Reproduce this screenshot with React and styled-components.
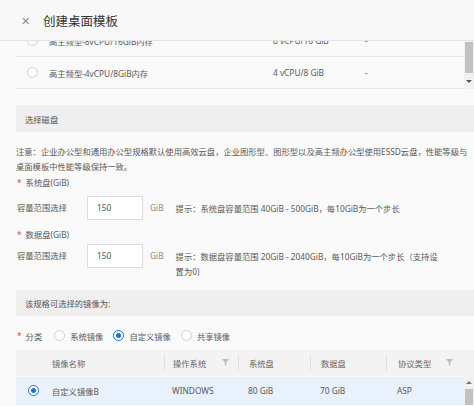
import React, { useLayoutEffect, useRef } from 'react';
import styled, { createGlobalStyle } from 'styled-components';

const GlobalStyle = createGlobalStyle`
  html, body {
    margin: 0;
    padding: 0;
    background: #fafafa;
  }
  body {
    font-family: "Noto Sans", "Noto Sans CJK SC", sans-serif;
    font-size: 8.3px;
    color: #595959;
  }
`;

const Page = styled.div`
  width: 474px;
  height: 406px;
  overflow: hidden;
  background: #fafafa;
  display: flex;
  flex-direction: column;
`;

const Header = styled.div`
  height: 41px;
  flex-shrink: 0;
  box-sizing: border-box;
  border-bottom: 1px solid #e3e3e3;
  background: #f8f8f8;
  display: flex;
  align-items: center;
  padding-left: 21px;
  gap: 13px;
`;

const Close = styled.span`
  font-size: 11px;
  color: #8a8a8a;
  line-height: 1;
`;

const Title = styled.h1`
  margin: 0;
  font-size: 12.5px;
  font-weight: 400;
  color: #333;
`;

const Body = styled.div`
  padding-left: 16px;
  display: flex;
  flex-direction: column;
`;

/* 规格列表 (已滚动) */
const SpecBox = styled.div`
  height: 48px;
  display: flex;
`;

const SpecList = styled.div`
  flex: 1;
  overflow: hidden;
`;

const SpecRow = styled.div`
  height: 32px;
  box-sizing: border-box;
  border-bottom: 1px solid #e8e8e8;
  display: flex;
  align-items: center;
`;

const Cell = styled.div`
  width: ${(p) => p.$w}px;
  flex-shrink: 0;
  box-sizing: border-box;
  padding-left: ${(p) => p.$pad || 0}px;
  padding-right: ${(p) => p.$padR || 0}px;
  display: flex;
  align-items: center;
  justify-content: ${(p) => (p.$center ? 'center' : 'space-between')};
  white-space: nowrap;
`;

const ScrollTrack = styled.div`
  width: 10px;
  flex-shrink: 0;
  background: #f1f1f1;
  display: flex;
  flex-direction: column;
  align-items: center;
  justify-content: ${(p) => (p.$up ? 'flex-start' : 'space-between')};
  padding: ${(p) => (p.$up ? '5px 0 0' : '1px 0 6px')};
  box-sizing: border-box;
`;

const ScrollThumb = styled.div`
  width: 8px;
  height: ${(p) => p.$h}px;
  background: #c1c1c1;
  margin-top: ${(p) => p.$mt || 0}px;
`;

const Arrow = styled.div`
  width: 0;
  height: 0;
  border-left: 3px solid transparent;
  border-right: 3px solid transparent;
  ${(p) => (p.$up ? 'border-bottom: 3px solid #777;' : 'border-top: 3px solid #555;')}
`;

const Radio = styled.span`
  width: 11px;
  height: 11px;
  box-sizing: border-box;
  border-radius: 50%;
  border: 1px solid ${(p) => (p.$checked ? '#1f6fd1' : '#cfcfcf')};
  background: #fff;
  display: inline-flex;
  align-items: center;
  justify-content: center;
  flex-shrink: 0;

  &::after {
    content: '';
    width: 5px;
    height: 5px;
    border-radius: 50%;
    background: ${(p) => (p.$checked ? '#1f6fd1' : 'transparent')};
  }
`;

const Band = styled.div`
  margin-top: ${(p) => p.$mt}px;
  height: ${(p) => p.$h}px;
  background: #efefef;
  display: flex;
  align-items: center;
  padding-left: 9px;
  color: #555;
`;

const Note = styled.div`
  margin-top: 12px;
  width: 455px;
  line-height: 15px;
`;

const FieldTitle = styled.div`
  margin-top: ${(p) => p.$mt}px;
  line-height: 14px;
  padding-left: 1px;
`;

const Star = styled.span`
  color: #e2424b;
  margin-right: 4px;
`;

const InputRow = styled.div`
  margin-top: ${(p) => p.$mt}px;
  display: flex;
  align-items: flex-start;
  padding-left: 1px;
`;

const FieldLabel = styled.div`
  width: 70px;
  line-height: 24px;
`;

const NumInput = styled.div`
  width: 56px;
  height: 24px;
  box-sizing: border-box;
  border: 1px solid #dcdcdc;
  background: #fff;
  padding-left: 9px;
  line-height: 22px;
  color: #555;
`;

const Unit = styled.div`
  margin-left: 7px;
  line-height: 24px;
  color: #888;
`;

const Hint = styled.div`
  margin-left: 12px;
  padding-top: 4.5px;
  line-height: 15px;
  max-width: 266px;
`;

const CategoryRow = styled.div`
  margin-top: 13px;
  height: 14px;
  display: flex;
  align-items: center;
  padding-left: 1px;
`;

const Option = styled.label`
  display: flex;
  align-items: center;
  gap: 5px;
  margin-left: ${(p) => p.$ml}px;
`;

const Table = styled.div`
  margin-top: 7px;
  display: flex;
  flex-direction: column;
`;

const HeadRow = styled.div`
  height: 26px;
  background: #f3f3f3;
  display: flex;
  align-items: center;
  color: #666;
`;

const HeadCell = styled(Cell)`
  height: 16px;
  border-left: ${(p) => (p.$sep ? '1px solid #e0e0e0' : 'none')};
`;

const TableBody = styled.div`
  display: flex;
  height: 29px;
`;

const DataRow = styled.div`
  flex: 1;
  height: 28px;
  margin-top: 1px;
  background: #e9f1fc;
  display: flex;
  align-items: center;
`;

const Funnel = () => (
  <svg width="7" height="7" viewBox="0 0 7 7">
    <polygon points="0,0 7,0 4.2,3.4 4.2,7 2.8,6 2.8,3.4" fill="#bdbdbd" />
  </svg>
);

const specs = [
  { id: 1, name: '高主频型-8vCPU/16GiB内存', cpu: '8 vCPU/16 GiB' },
  { id: 2, name: '高主频型-4vCPU/8GiB内存', cpu: '4 vCPU/8 GiB' },
  { id: 3, name: '高主频型-2vCPU/4GiB内存', cpu: '2 vCPU/4 GiB' },
];

const columns = [
  { key: 'radio', w: 34, center: true },
  { key: 'name', w: 114, pad: 2, title: '镜像名称' },
  { key: 'os', w: 74, pad: 8, padR: 9, title: '操作系统', filter: true, sep: true },
  { key: 'sys', w: 72, pad: 10, title: '系统盘', sep: true },
  { key: 'data', w: 76, pad: 10, title: '数据盘', sep: true },
  { key: 'proto', w: 78, pad: 11, padR: 11, title: '协议类型', filter: true, sep: true },
];

const image = { name: '自定义镜像B', os: 'WINDOWS', sys: '80 GiB', data: '70 GiB', proto: 'ASP' };

const App = () => {
  const specRef = useRef(null);

  useLayoutEffect(() => {
    if (specRef.current) specRef.current.scrollTop = 16;
  }, []);

  return (
    <>
      <GlobalStyle />
      <Page>
        <Header>
          <Close>✕</Close>
          <Title>创建桌面模板</Title>
        </Header>

        <Body>
          <SpecBox>
            <SpecList ref={specRef}>
              {specs.map((s) => (
                <SpecRow key={s.id}>
                  <Cell $w={33} $center>
                    <Radio />
                  </Cell>
                  <Cell $w={224}>{s.name}</Cell>
                  <Cell $w={92}>{s.cpu}</Cell>
                  <Cell $w={40}>-</Cell>
                </SpecRow>
              ))}
            </SpecList>
            <ScrollTrack>
              <ScrollThumb $h={31} />
              <Arrow />
            </ScrollTrack>
          </SpecBox>

          <Band $mt={16} $h={27}>选择磁盘</Band>

          <Note>
            注意：企业办公型和通用办公型规格默认使用高效云盘，企业图形型、图形型以及高主频办公型使用ESSD云盘，性能等级与桌面模板中性能等级保持一致。
          </Note>

          <FieldTitle $mt={2}>
            <Star>*</Star>系统盘(GiB)
          </FieldTitle>
          <InputRow $mt={6}>
            <FieldLabel>容量范围选择</FieldLabel>
            <NumInput>150</NumInput>
            <Unit>GiB</Unit>
            <Hint>提示：系统盘容量范围 40GiB - 500GiB，每10GiB为一个步长</Hint>
          </InputRow>

          <FieldTitle $mt={8}>
            <Star>*</Star>数据盘(GiB)
          </FieldTitle>
          <InputRow $mt={2}>
            <FieldLabel>容量范围选择</FieldLabel>
            <NumInput>150</NumInput>
            <Unit>GiB</Unit>
            <Hint>提示：数据盘容量范围 20GiB - 2040GiB，每10GiB为一个步长（支持设置为0)</Hint>
          </InputRow>

          <Band $mt={11} $h={26}>该规格可选择的镜像为:</Band>

          <CategoryRow>
            <Star>*</Star>分类
            <Option $ml={12}>
              <Radio />
              系统镜像
            </Option>
            <Option $ml={10}>
              <Radio $checked />
              自定义镜像
            </Option>
            <Option $ml={10}>
              <Radio />
              共享镜像
            </Option>
          </CategoryRow>

          <Table>
            <HeadRow>
              {columns.map((c) => (
                <HeadCell key={c.key} $w={c.w} $pad={c.pad} $padR={c.padR} $sep={c.sep} $center={c.center}>
                  {c.title && <span>{c.title}</span>}
                  {c.filter && <Funnel />}
                </HeadCell>
              ))}
            </HeadRow>
            <TableBody>
              <DataRow>
                {columns.map((c) => (
                  <Cell key={c.key} $w={c.w} $pad={c.pad} $center={c.center}>
                    {c.key === 'radio' ? <Radio $checked /> : image[c.key]}
                  </Cell>
                ))}
              </DataRow>
              <ScrollTrack $up>
                <Arrow $up />
                <ScrollThumb $h={20} $mt={5} />
              </ScrollTrack>
            </TableBody>
          </Table>
        </Body>
      </Page>
    </>
  );
};

export default App;
